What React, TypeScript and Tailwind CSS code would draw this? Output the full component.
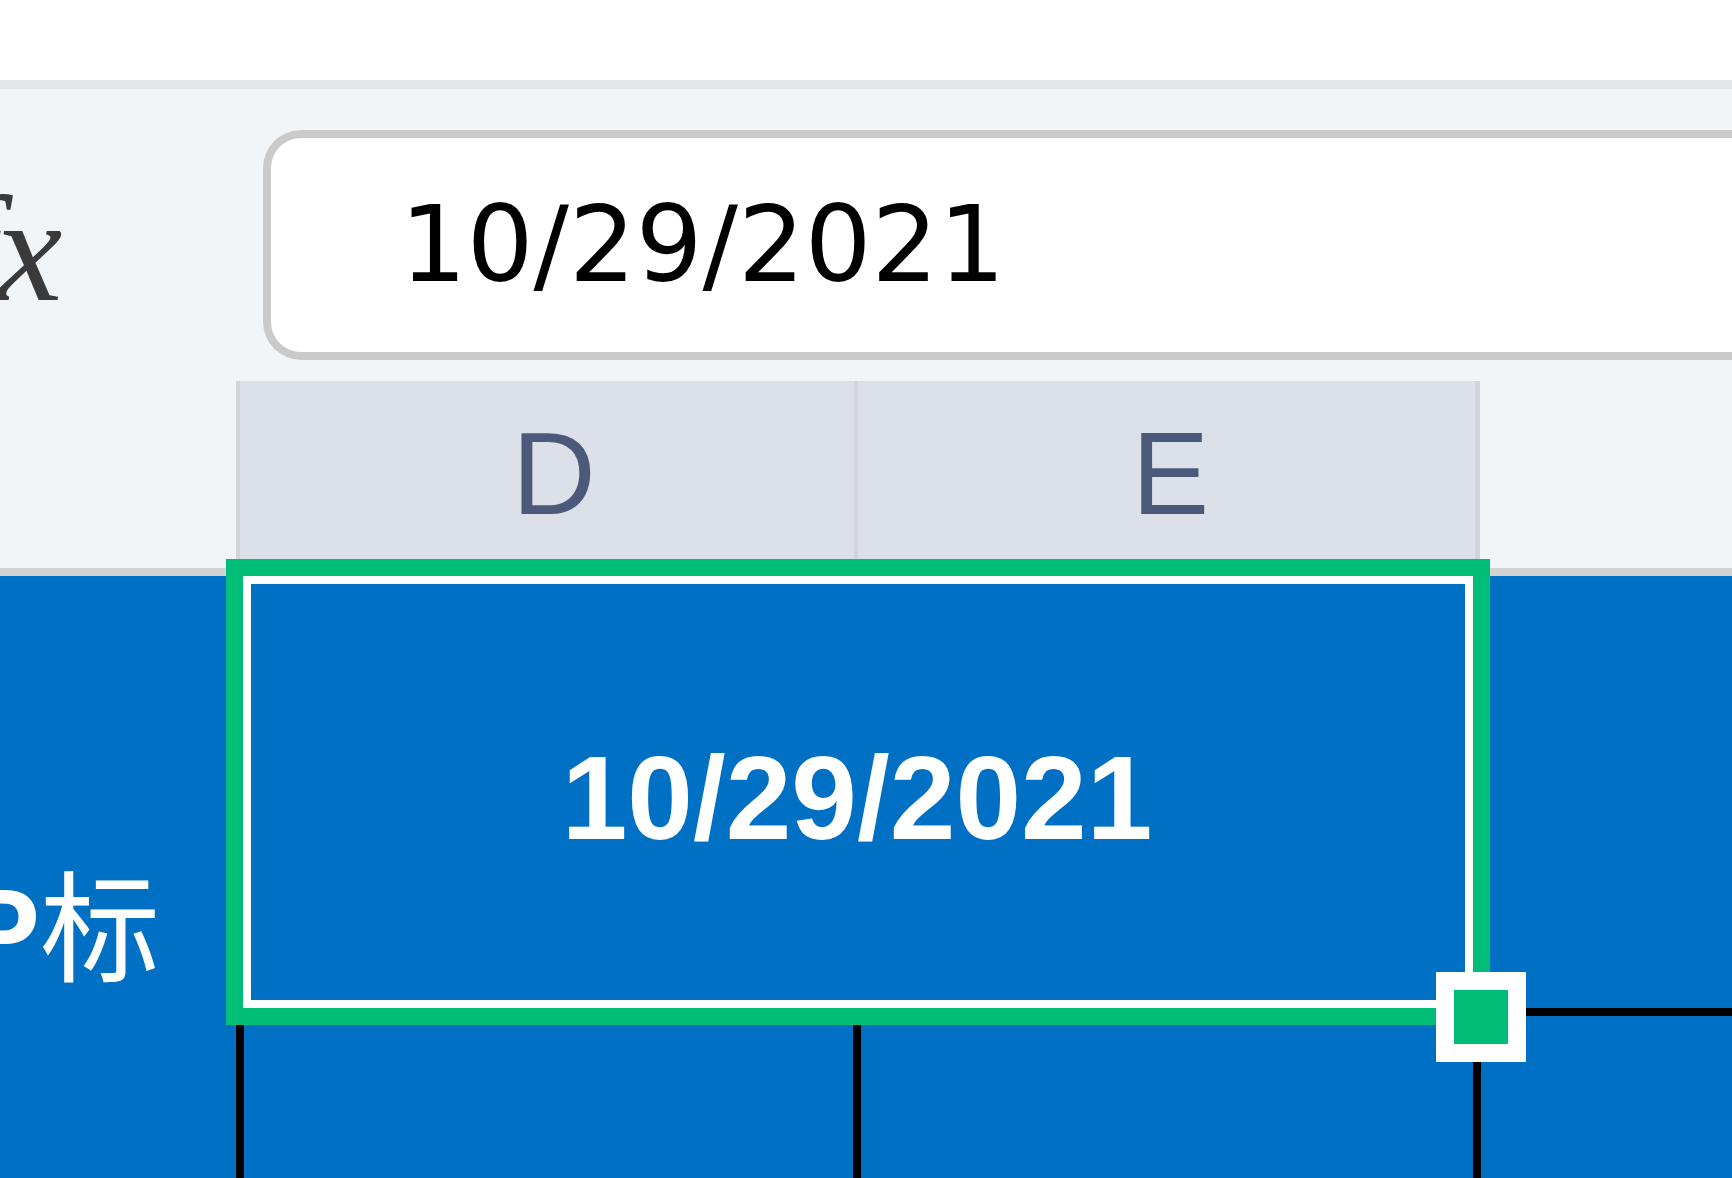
export default function App() {
  return (
    <div className="w-[1732px] h-[1178px] overflow-hidden bg-white flex flex-col select-none">
      {/* window top */}
      <div className="h-[80px] shrink-0 bg-white" />
      <div className="h-[9px] shrink-0 bg-[#e4e5ea]" />

      {/* formula bar */}
      <div className="h-[292px] shrink-0 bg-[#f2f5f8] flex items-start">
        <div className="w-[263px] shrink-0 mt-[85px] overflow-visible">
          <span
            className="block ml-[-46px] text-[150px] leading-none italic text-[#3a3a3a] whitespace-nowrap"
            style={{ fontFamily: '"Liberation Serif", serif' }}
          >
            fx
          </span>
        </div>
        <div className="flex-1 mt-[41px] h-[230px] bg-white border-[8px] border-r-0 border-[#cacaca] rounded-l-[38px] flex items-start pt-[55px] pl-[129px]">
          <span
            className="text-[105px] leading-none text-black whitespace-nowrap"
            style={{ fontFamily: '"DejaVu Sans", sans-serif' }}
          >
            10/29/2021
          </span>
        </div>
      </div>

      {/* column headers */}
      <div
        className="h-[187px] shrink-0 bg-[#f2f5f8] flex"
        style={{ fontFamily: '"Liberation Sans", Arial, sans-serif' }}
      >
        <div className="w-[236px] shrink-0" />
        <div className="w-[620px] shrink-0 bg-[#dce0e8] border-l-[4px] border-r-[2px] border-[#d2d4d9] flex justify-center items-start pt-[35px] pl-[14px]">
          <span className="text-[116px] leading-none text-[#4b5a7b]">D</span>
        </div>
        <div className="w-[624px] shrink-0 bg-[#dce0e8] border-l-[2px] border-r-[5px] border-[#d2d4d9] flex justify-center items-start pt-[35px] pl-[8px]">
          <span className="text-[116px] leading-none text-[#4b5a7b]">E</span>
        </div>
        <div className="flex-1" />
      </div>
      <div className="h-[8px] shrink-0 bg-[#d3d3d3]" />

      {/* grid body */}
      <div
        className="flex-1 bg-[#0070c4] flex relative"
        style={{ fontFamily: '"Liberation Sans", Arial, sans-serif' }}
      >
        {/* column C, merged */}
        <div className="w-[236px] shrink-0 flex justify-end pt-[285px] pr-[76px]">
          <span className="text-[120px] leading-[120px] text-white whitespace-nowrap">
            <span className="font-bold">P</span>
            <span style={{ fontFamily: '"Noto Sans CJK SC", sans-serif' }}>标</span>
          </span>
        </div>

        <div className="flex-1 flex flex-col">
          {/* row with merged D:E */}
          <div className="h-[432px] shrink-0 flex">
            <div className="w-[1242px] shrink-0 flex justify-center items-start pt-[163px]">
              <span className="text-[118px] leading-none font-bold text-white whitespace-nowrap">
                10/29/2021
              </span>
            </div>
            <div className="flex-1" />
          </div>
          <div className="h-[8px] shrink-0 bg-black" />
          <div className="flex-1 flex">
            <div className="w-[617px] shrink-0 border-l-[8px] border-black" />
            <div className="w-[620px] shrink-0 border-l-[8px] border-black" />
            <div className="flex-1 border-l-[8px] border-black" />
          </div>
        </div>
      </div>

      {/* selection overlay */}
      <div className="absolute left-[226px] top-[559px] w-[1264px] h-[466px] border-[17px] border-[#00bd78] pointer-events-none">
        <div className="w-full h-full border-[8px] border-white" />
      </div>
      <div className="absolute left-[1436px] top-[972px] w-[90px] h-[90px] bg-white flex items-center justify-center">
        <div className="w-[54px] h-[54px] bg-[#00bd78]" />
      </div>
    </div>
  );
}
